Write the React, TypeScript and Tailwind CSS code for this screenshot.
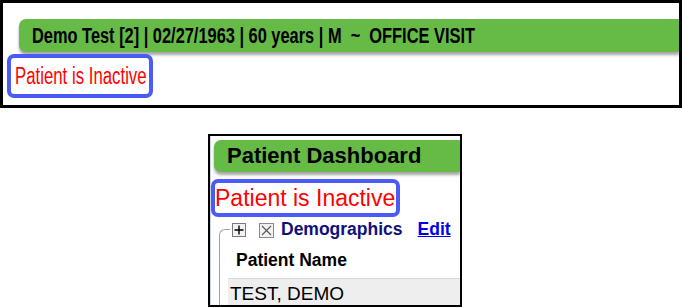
import React from "react";

export default function App() {
  return (
    <div className="w-[682px] h-[307px] bg-white overflow-hidden font-['Liberation_Sans',Arial,sans-serif]">
      {/* Top panel */}
      <div className="w-[682px] h-[108px] border-[3px] border-black pt-[16px]">
        <div className="ml-[16px] h-[33px] bg-[#66ba46] rounded-l-[7px] shadow-[0_3px_3px_rgba(0,0,0,0.35)] flex items-center pl-[13px] overflow-hidden whitespace-nowrap">
          <span className="inline-block origin-left scale-x-[0.745] text-[22px] font-bold text-black leading-none">
            Demo Test [2] | 02/27/1963 | 60 years | M&nbsp; ~&nbsp; OFFICE VISIT
          </span>
        </div>
        <div className="ml-[4px] mt-[2px] w-[146px] h-[44px] border-4 border-[#4a5cf5] rounded-[7px] flex items-center pl-[4px] overflow-hidden whitespace-nowrap">
          <span className="inline-block origin-left scale-x-[0.73] text-[23px] text-[#ff0000] leading-none">
            Patient is Inactive
          </span>
        </div>
      </div>

      {/* Bottom panel */}
      <div className="ml-[208px] mt-[26px] w-[254px] h-[173px] border-2 border-black overflow-hidden">
        <div className="h-full border-l border-[#cdd6e4] pt-[4px]">
          <div className="ml-[3px] h-[32px] bg-[#66ba46] rounded-l-[7px] shadow-[0_3px_3px_rgba(0,0,0,0.35)] flex items-center pl-[13px] whitespace-nowrap">
            <span className="text-[22px] font-bold text-black leading-none">Patient Dashboard</span>
          </div>
          <div className="mt-[7px] w-[189px] h-[38px] border-4 border-[#4a5cf5] rounded-[7px] flex items-center overflow-hidden whitespace-nowrap">
            <span className="text-[23px] text-[#ff0000] leading-none">Patient is Inactive</span>
          </div>
          <fieldset className="ml-[8px] mt-[2px] w-[300px] border-l border-t border-[#a0a0a0] rounded-tl-[6px] border-r-0 border-b-0">
            <legend className="ml-[10px] pl-[2px] pr-[40px] bg-white flex items-center whitespace-nowrap">
              <span className="w-[14px] h-[14px] border border-[#7a7a7a] bg-[#f2f2f2] flex items-center justify-center mt-[2px]">
                <svg width="12" height="12" viewBox="0 0 12 12">
                  <path d="M6 1.5v9M1.5 6h9" stroke="#000" strokeWidth="1.4" />
                </svg>
              </span>
              <span className="ml-[13px] w-[15px] h-[15px] border border-[#8a8a8a] bg-[#f2f2f2] flex items-center justify-center mt-[2px]">
                <svg width="13" height="13" viewBox="0 0 13 13">
                  <path d="M2 2l9 9M11 2l-9 9" stroke="#555" strokeWidth="1.1" />
                </svg>
              </span>
              <span className="ml-[7px] text-[17.5px] font-bold text-[#10107a] leading-[20px]">Demographics</span>
              <span className="ml-[15px] text-[17.5px] font-bold text-[#0000ee] underline leading-[20px]">Edit</span>
            </legend>
            <div className="pl-[16px] mt-[11px] text-[17.5px] font-bold text-black leading-[20px] whitespace-nowrap">
              Patient Name
            </div>
            <div className="ml-[8px] mt-[8px] border-t border-[#d8d8d8] bg-[#eeeeee] pl-[2px] pt-[4px] pb-[4px] text-[19px] text-black leading-[22px] whitespace-nowrap">
              TEST, DEMO
            </div>
          </fieldset>
        </div>
      </div>
    </div>
  );
}
